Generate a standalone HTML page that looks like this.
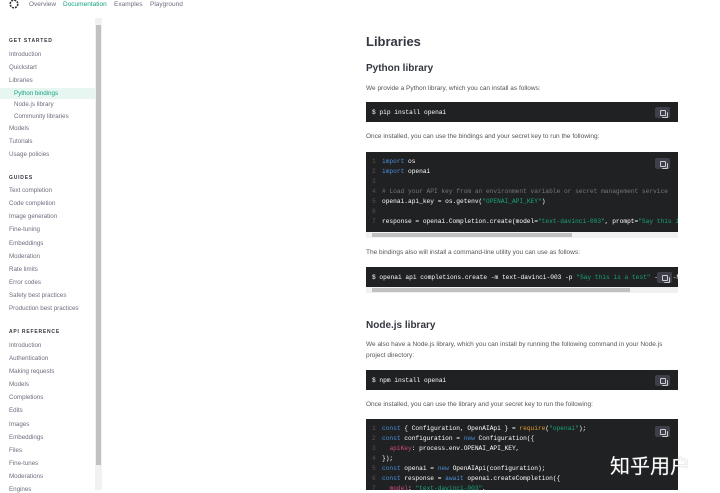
<!DOCTYPE html><html><head><meta charset="utf-8"><style>
*{margin:0;padding:0;box-sizing:border-box}
body{width:720px;height:490px;overflow:hidden;background:#fff;font-family:"Liberation Sans",sans-serif;position:relative;color:#353740}
.a{position:absolute;white-space:nowrap}
.nav{font-size:6.5px;color:#6e6e80}
.side{font-size:6.2px;color:#6e6e80;left:9px}
.hd{font-size:5px;font-weight:bold;letter-spacing:.8px;color:#353740;left:9px}
.p{font-size:6.5px;color:#555;left:366px}
.code{position:absolute;left:366px;width:312px;background:#202123;color:#fff;font-family:"Liberation Mono",monospace;font-size:6.2px;overflow:hidden;white-space:pre}
.cp{position:absolute;right:8px;width:15px;height:11px;background:#3e3f4b;border-radius:2px}
.cp:after{content:"";position:absolute;left:5px;top:3px;width:4px;height:4px;border:1px solid #ccc;border-radius:1px;box-shadow:1px 1px 0 0 #3e3f4b,2px 2px 0 0 #ccc}
.ln{color:#555;display:inline-block;width:10px}
.k{color:#4a8fd8}.s{color:#19a37a}.c{color:#777}.o{color:#e39b2d}.r{color:#d14a7a}
.sb{position:absolute;left:366px;width:312px;height:6px;background:#f1f1f1}
.sb div{position:absolute;top:1px;left:6px;height:4px;background:#c1c1c1}
h1{font-size:13px}h2{font-size:10px}
</style></head><body>
<svg class="a" style="left:8px;top:0" width="12" height="10" viewBox="0 0 12 10"><circle cx="6" cy="4" r="3.8" fill="none" stroke="#333" stroke-width="1.6" stroke-dasharray="2 1"/></svg>
<div class="a nav" style="left:29px;top:1px">Overview</div>
<div class="a nav" style="left:63px;top:1px;color:#10a37f">Documentation</div>
<div class="a nav" style="left:114px;top:1px">Examples</div>
<div class="a nav" style="left:150px;top:1px">Playground</div>
<div class="a" style="left:95px;top:18px;width:7px;height:472px;background:#f1f1f1"></div>
<div class="a" style="left:96px;top:25px;width:5px;height:440px;background:#c1c1c1"></div>
<div class="a" style="left:0;top:88px;width:95px;height:11px;background:#e8f6f2"></div>
<div class="a hd" style="top:38px">GET STARTED</div>
<div class="a side" style="top:51px">Introduction</div>
<div class="a side" style="top:64px">Quickstart</div>
<div class="a side" style="top:77px">Libraries</div>
<div class="a side" style="top:90px;left:14px;color:#10a37f">Python bindings</div>
<div class="a side" style="top:101px;left:14px">Node.js library</div>
<div class="a side" style="top:113px;left:14px">Community libraries</div>
<div class="a side" style="top:125px">Models</div>
<div class="a side" style="top:138px">Tutorials</div>
<div class="a side" style="top:151px">Usage policies</div>
<div class="a hd" style="top:175px">GUIDES</div>
<div class="a side" style="top:187px">Text completion</div>
<div class="a side" style="top:200px">Code completion</div>
<div class="a side" style="top:213px">Image generation</div>
<div class="a side" style="top:226px">Fine-tuning</div>
<div class="a side" style="top:240px">Embeddings</div>
<div class="a side" style="top:253px">Moderation</div>
<div class="a side" style="top:266px">Rate limits</div>
<div class="a side" style="top:279px">Error codes</div>
<div class="a side" style="top:292px">Safety best practices</div>
<div class="a side" style="top:305px">Production best practices</div>
<div class="a hd" style="top:329px">API REFERENCE</div>
<div class="a side" style="top:342px">Introduction</div>
<div class="a side" style="top:355px">Authentication</div>
<div class="a side" style="top:368px">Making requests</div>
<div class="a side" style="top:381px">Models</div>
<div class="a side" style="top:394px">Completions</div>
<div class="a side" style="top:407px">Edits</div>
<div class="a side" style="top:421px">Images</div>
<div class="a side" style="top:434px">Embeddings</div>
<div class="a side" style="top:447px">Files</div>
<div class="a side" style="top:460px">Fine-tunes</div>
<div class="a side" style="top:473px">Moderations</div>
<div class="a side" style="top:486px">Engines</div>

<h1 class="a" style="left:366px;top:34px">Libraries</h1>
<h2 class="a" style="left:366px;top:63px">Python library</h2>
<div class="a p" style="top:85px">We provide a Python library, which you can install as follows:</div>
<div class="code" style="top:102px;height:20px;padding:7px 6px">$ pip install openai<div class="cp" style="top:5px"></div></div>
<div class="a p" style="top:133px">Once installed, you can use the bindings and your secret key to run the following:</div>
<div class="code" style="top:152px;height:80px;padding:5px 6px;line-height:10px"><div class="cp" style="top:6px"></div><span class="ln">1</span><span class="k">import</span> os
<span class="ln">2</span><span class="k">import</span> openai
<span class="ln">3</span>
<span class="ln">4</span><span class="c"># Load your API key from an environment variable or secret management service</span>
<span class="ln">5</span>openai.api_key = os.getenv(<span class="s">"OPENAI_API_KEY"</span>)
<span class="ln">6</span>
<span class="ln">7</span>response = openai.Completion.create(model=<span class="s">"text-davinci-003"</span>, prompt=<span class="s">"Say this is a test"</span></div>
<div class="sb" style="top:232px"><div style="width:200px"></div></div>
<div class="a p" style="top:249px">The bindings also will install a command-line utility you can use as follows:</div>
<div class="code" style="top:267px;height:20px;padding:7px 6px">$ openai api completions.create -m text-davinci-003 -p <span class="s">"Say this is a test"</span> -t 0 -M 7 --stream<div class="cp" style="top:5px;right:6px"></div></div>
<div class="sb" style="top:287px"><div style="width:258px"></div></div>
<h2 class="a" style="left:366px;top:320px">Node.js library</h2>
<div class="a p" style="top:341px">We also have a Node.js library, which you can install by running the following command in your Node.js</div>
<div class="a p" style="top:352px">project directory:</div>
<div class="code" style="top:370px;height:20px;padding:7px 6px">$ npm install openai<div class="cp" style="top:5px"></div></div>
<div class="a p" style="top:401px">Once installed, you can use the library and your secret key to run the following:</div>
<div class="code" style="top:419px;height:71px;padding:5px 6px;line-height:10px"><div class="cp" style="top:7px"></div><span class="ln">1</span><span class="k">const</span> { Configuration, OpenAIApi } = <span class="o">require</span>(<span class="s">"openai"</span>);
<span class="ln">2</span><span class="k">const</span> configuration = <span class="k">new</span> Configuration({
<span class="ln">3</span>  <span class="r">apiKey</span>: process.env.OPENAI_API_KEY,
<span class="ln">4</span>});
<span class="ln">5</span><span class="k">const</span> openai = <span class="k">new</span> OpenAIApi(configuration);
<span class="ln">6</span><span class="k">const</span> response = <span class="k">await</span> openai.createCompletion({
<span class="ln">7</span>  <span class="r">model</span>: <span class="s">"text-davinci-003"</span>,</div>
<div class="a" style="left:610px;top:450px;font-size:20px;color:#fff;font-family:'Noto Sans CJK SC',sans-serif;text-shadow:0 0 1px #888">知乎用户</div>
</body></html>
